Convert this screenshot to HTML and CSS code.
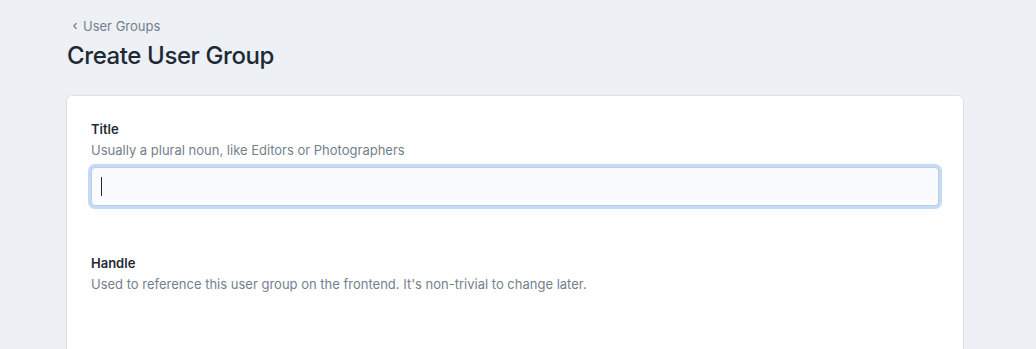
FILE: index.html
```html
<!DOCTYPE html>
<html lang="en">
<head>
    <meta charset="UTF-8">
    <meta name="viewport" content="width=device-width, initial-scale=1.0">
    <title>Create User Group</title>
    <link rel="stylesheet" href="styles.css">
</head>
<body>

    <div class="page">
        <div class="page-header">
            <a class="breadcrumb" href="#">
                <svg class="chevron" viewBox="0 0 8 8" width="8" height="8"><path d="M5.2 1.5 L2.8 4 L5.2 6.5" fill="none" stroke="currentColor" stroke-width="1.2" stroke-linecap="round" stroke-linejoin="round"/></svg>
                <span>User Groups</span>
            </a>
            <h1>Create User Group</h1>
        </div>

        <div class="card">
            <div class="field">
                <label for="title">Title</label>
                <p class="help">Usually a plural noun, like Editors or Photographers</p>
                <div class="input-wrap">
                    <input type="text" id="title" class="text-input">
                    <span class="caret"></span>
                </div>
            </div>

            <div class="field">
                <label for="handle">Handle</label>
                <p class="help">Used to reference this user group on the frontend. It's non-trivial to change later.</p>
            </div>
        </div>
    </div>

</body>
</html>
```

FILE: styles.css
```css
:root {
    --page-bg: #edf0f5;
    --card-bg: #ffffff;
    --heading: #1c2a35;
    --label: #1f2a35;
    --muted: #737f8c;
    --input-border: #c4ccd4;
    --ring: #c2dbfa;
}

body {
    margin: 0;
    background-color: var(--page-bg);
    font-family: Inter, 'Noto Sans', sans-serif;
    color: var(--label);
    -webkit-font-smoothing: antialiased;
}

.page {
    margin-left: 67px;
    width: 896px;
    padding-top: 17px;
}

/* -- header -- */
.breadcrumb {
    display: flex;
    align-items: center;
    gap: 4px;
    color: var(--muted);
    font-size: 13px;
    line-height: 18px;
    text-decoration: none;
    margin-left: 4px;
}

.chevron {
    display: block;
}

h1 {
    margin: 6px 0 0;
    font-size: 24px;
    font-weight: 500;
    line-height: 30px;
    color: var(--heading);
    letter-spacing: -0.4px;
}

/* -- card -- */
.card {
    margin-top: 25px;
    background: var(--card-bg);
    border-radius: 5px;
    box-shadow: 0 0 0 1px rgba(40, 56, 80, 0.06), 0 1px 2px rgba(40, 56, 80, 0.08);
    padding: 24px 24px 80px;
}

.field + .field {
    margin-top: 48px;
}

label {
    display: block;
    font-size: 13px;
    font-weight: 600;
    line-height: 18px;
    color: var(--label);
}

.help {
    margin: 3px 0 0;
    font-size: 13px;
    line-height: 18px;
    color: var(--muted);
}

.input-wrap {
    position: relative;
    margin-top: 8px;
}

.text-input {
    display: block;
    box-sizing: border-box;
    width: 100%;
    height: 39px;
    border: 1px solid var(--input-border);
    border-radius: 4px;
    background: #f9fbfe;
    box-shadow: 0 0 0 3px var(--ring);
    font-family: inherit;
    font-size: 14px;
    outline: none;
}

.caret {
    position: absolute;
    left: 10px;
    top: 10px;
    width: 1px;
    height: 19px;
    background: #1c2a35;
}
```
